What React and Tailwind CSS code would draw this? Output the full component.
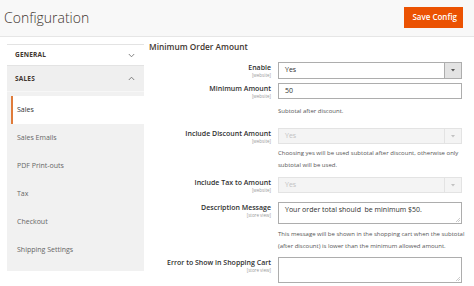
import React from 'react';

const Chevron = ({ up }) => (
  <svg width="7" height="5" viewBox="0 0 7 5" className="text-[#666]">
    <path d={up ? 'M0.8 4 L3.5 1.2 L6.2 4' : 'M0.8 1 L3.5 3.8 L6.2 1'} fill="none" stroke="currentColor" strokeWidth="0.8" />
  </svg>
);

const Row = ({ label, scope, className, children }) => (
  <div className={'flex ' + (className || '')}>
    <div className="w-[122px] shrink-0 text-right pt-[1px]">
      <div className="text-[7px] leading-[9px] font-semibold text-[#303030] whitespace-nowrap">{label}</div>
      <div className="text-[4.5px] leading-[6px] text-[#9a9a9a]">{scope}</div>
    </div>
    <div className="ml-[7px] w-[184px]">{children}</div>
  </div>
);

const Select = ({ value, disabled, tall }) => (
  <div
    className={
      'flex border ' +
      (tall ? 'h-[17px] ' : 'h-[16px] ') +
      (disabled ? 'border-[#e3e3e3] bg-[#f4f4f4]' : 'border-[#adadad] bg-white')
    }
  >
    <div className={'flex-1 pl-[6px] text-[7px] flex items-center ' + (disabled ? 'text-[#c2c2c2]' : 'text-[#303030]')}>
      {value}
    </div>
    <div
      className={
        'w-[17px] flex items-center justify-center border-l ' +
        (disabled ? 'border-[#e3e3e3] bg-[#f4f4f4]' : 'border-[#adadad] bg-[#e3e3e3]')
      }
    >
      <svg width="4" height="3" viewBox="0 0 4 3">
        <path d="M0 0 L4 0 L2 2.5 Z" fill={disabled ? '#c2c2c2' : '#555'} />
      </svg>
    </div>
  </div>
);

const Note = ({ children, className }) => (
  <div className={'text-[6px] leading-[12px] text-[#555] whitespace-nowrap ' + (className || '')}>{children}</div>
);

const Resize = () => (
  <svg width="5" height="5" viewBox="0 0 5 5" className="absolute right-[1px] bottom-[1px]">
    <path d="M1 5 L5 1 M3 5 L5 3" stroke="#aaa" strokeWidth="0.6" />
  </svg>
);

const NavItem = ({ children, active }) => (
  <div
    className={
      'h-[28px] flex items-center text-[7px] ' +
      (active
        ? 'bg-white border-l-2 border-[#e07b3a] pl-[4px] text-[#303030]'
        : 'pl-[6px] text-[#666]')
    }
  >
    {children}
  </div>
);

export default function App() {
  return (
    <div className="w-[474px] h-[286px] overflow-hidden bg-white" style={{ fontFamily: '"Open Sans", sans-serif' }}>
      {/* Header */}
      <div className="h-[37px] bg-[#f8f8f8] border-b border-[#e6e6e6] flex items-center justify-between pl-[4px] pr-[11px]">
        <h1 className="text-[14px] font-light text-[#41362f] -mt-[2px]">Configuration</h1>
        <button className="h-[21px] pl-[8px] pr-[6px] bg-[#eb5202] text-white text-[8px] font-semibold -mt-[2px]">Save Config</button>
      </div>

      <div className="flex pt-[7px]">
        {/* Sidebar */}
        <div className="ml-[7px] w-[137px] shrink-0">
          <div className="h-[22px] bg-white border-y border-[#e3e3e3] flex items-center justify-between pl-[8px] pr-[9px]">
            <span className="text-[6.5px] font-bold text-[#41362f] tracking-[0.2px]">GENERAL</span>
            <Chevron />
          </div>
          <div className="h-[26px] bg-[#efefef] border-b border-[#f7f7f7] flex items-center justify-between pl-[8px] pr-[9px]">
            <span className="text-[6.5px] font-bold text-[#41362f] tracking-[0.2px]">SALES</span>
            <Chevron up />
          </div>
          <div className="bg-[#f1f1f1] pt-[4px] pl-[4px] pb-[7px]">
            <NavItem active>Sales</NavItem>
            <NavItem>Sales Emails</NavItem>
            <NavItem>PDF Print-outs</NavItem>
            <NavItem>Tax</NavItem>
            <NavItem>Checkout</NavItem>
            <NavItem>Shipping Settings</NavItem>
          </div>
        </div>

        {/* Main */}
        <div className="ml-[5px] flex-1">
          <div className="-mt-[3px] text-[8.3px] leading-[12px] font-semibold text-[#41362f]">Minimum Order Amount</div>

          <Row label="Enable" scope="[website]" className="mt-[9px]">
            <Select value="Yes" tall />
          </Row>

          <Row label="Minimum Amount" scope="[website]" className="mt-[4px]">
            <div className="h-[16px] border border-[#adadad] bg-white pl-[6px] text-[7px] flex items-center text-[#303030]">50</div>
            <Note className="mt-[6px]">Subtotal after discount.</Note>
          </Row>

          <Row label="Include Discount Amount" scope="[website]" className="mt-[11px]">
            <Select value="Yes" disabled />
            <Note className="mt-[3px]">
              Choosing yes will be used subtotal after discount, otherwise only
              <br />
              subtotal will be used.
            </Note>
          </Row>

          <Row label="Include Tax to Amount" scope="[website]" className="mt-[6px]">
            <Select value="Yes" disabled />
          </Row>

          <Row label="Description Message" scope="[store view]" className="mt-[9px]">
            <div className="relative h-[22px] border border-[#adadad] bg-white pl-[6px] pt-[2px] text-[7px] leading-[10px] text-[#303030]">
              Your order total should&nbsp; be minimum $50.
              <Resize />
            </div>
            <Note className="mt-[4px]">
              This message will be shown in the shopping cart when the subtotal
              <br />
              (after discount) is lower than the minimum allowed amount.
            </Note>
          </Row>

          <Row label="Error to Show in Shopping Cart" scope="[store view]" className="mt-[5px]">
            <div className="relative h-[26px] border border-[#adadad] bg-white">
              <Resize />
            </div>
          </Row>
        </div>
      </div>
    </div>
  );
}
